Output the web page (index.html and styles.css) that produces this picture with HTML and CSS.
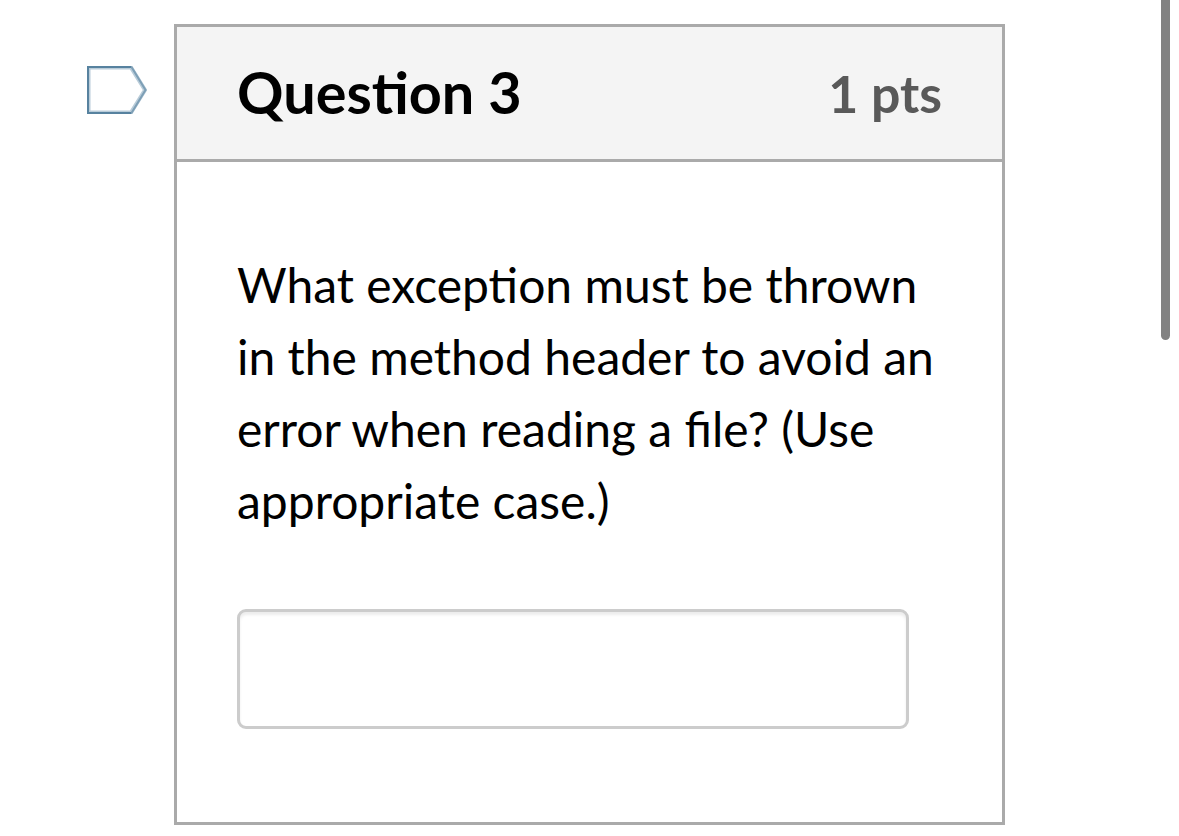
FILE: index.html
```
<!DOCTYPE html>
<html lang="en">
<head>
    <meta charset="UTF-8">
    <meta name="viewport" content="width=device-width, initial-scale=1.0">
    <title>Question 3</title>
    <link rel="stylesheet" href="styles.css">
</head>
<body>
    <div class="quiz">
        <svg class="flag" width="60" height="48" viewBox="0 0 60 48">
            <path class="flag-inner" d="M1.5 1.5H44L58 24L44 46.5H1.5Z"/>
            <path class="flag-edge" d="M44.5 1H1V47H44.5"/>
            <path class="flag-tip" d="M44.5 1L58.5 24L44.5 47"/>
        </svg>
        <div class="question">
            <div class="header">
                <h1 class="name">Question 3</h1>
                <span class="points">1 pts</span>
            </div>
            <div class="text">
                <p>What exception must be thrown in the method header to avoid an error when reading a file? (Use appropriate case.)</p>
                <input class="answer" type="text" aria-label="Answer">
            </div>
        </div>
    </div>
    <div class="scrollbar"></div>
</body>
</html>
```

FILE: styles.css
```
* {
    box-sizing: border-box;
}

body {
    margin: 0;
    height: 836px;
    overflow: hidden;
    background-color: #fff;
    color: #000;
    font-family: Lato, sans-serif;
}

.quiz {
    display: flex;
    align-items: flex-start;
    padding: 24px 0 0 87px;
}

.flag {
    flex: none;
    margin: 42px 27px 0 0;
    fill: none;
}

.flag-inner {
    stroke: #b9ccd9;
    stroke-width: 4;
}

.flag-edge {
    stroke: #57829f;
    stroke-width: 2;
}

.flag-tip {
    stroke: #7d9fb6;
    stroke-width: 2;
}

.question {
    width: 831px;
    height: 801px;
    border: 3px solid #aaa;
}

.header {
    display: flex;
    align-items: center;
    justify-content: space-between;
    height: 135px;
    padding: 0 60px;
    background-color: #f4f4f4;
    border-bottom: 3px solid #aaa;
}

.name {
    margin: 0;
    padding-bottom: 4px;
    font-size: 57.6px;
    font-weight: bold;
}

.points {
    color: #595959;
    font-size: 51.8px;
    font-weight: bold;
}

.text {
    padding: 87px 60px 0;
}

.text p {
    margin: 0 0 72px;
    font-size: 48px;
    line-height: 72px;
}

.answer {
    display: block;
    width: 672px;
    height: 120px;
    padding: 12px;
    border: 3px solid #ccc;
    border-radius: 9px;
    box-shadow: inset 0 3px 3px rgba(0, 0, 0, 0.075);
    font: inherit;
}

/* scroll thumb on top of the page */
.scrollbar {
    position: absolute;
    top: 0;
    right: 9px;
    width: 9px;
    height: 340px;
    background-color: #828282;
    border-radius: 0 0 5px 5px;
}
```
